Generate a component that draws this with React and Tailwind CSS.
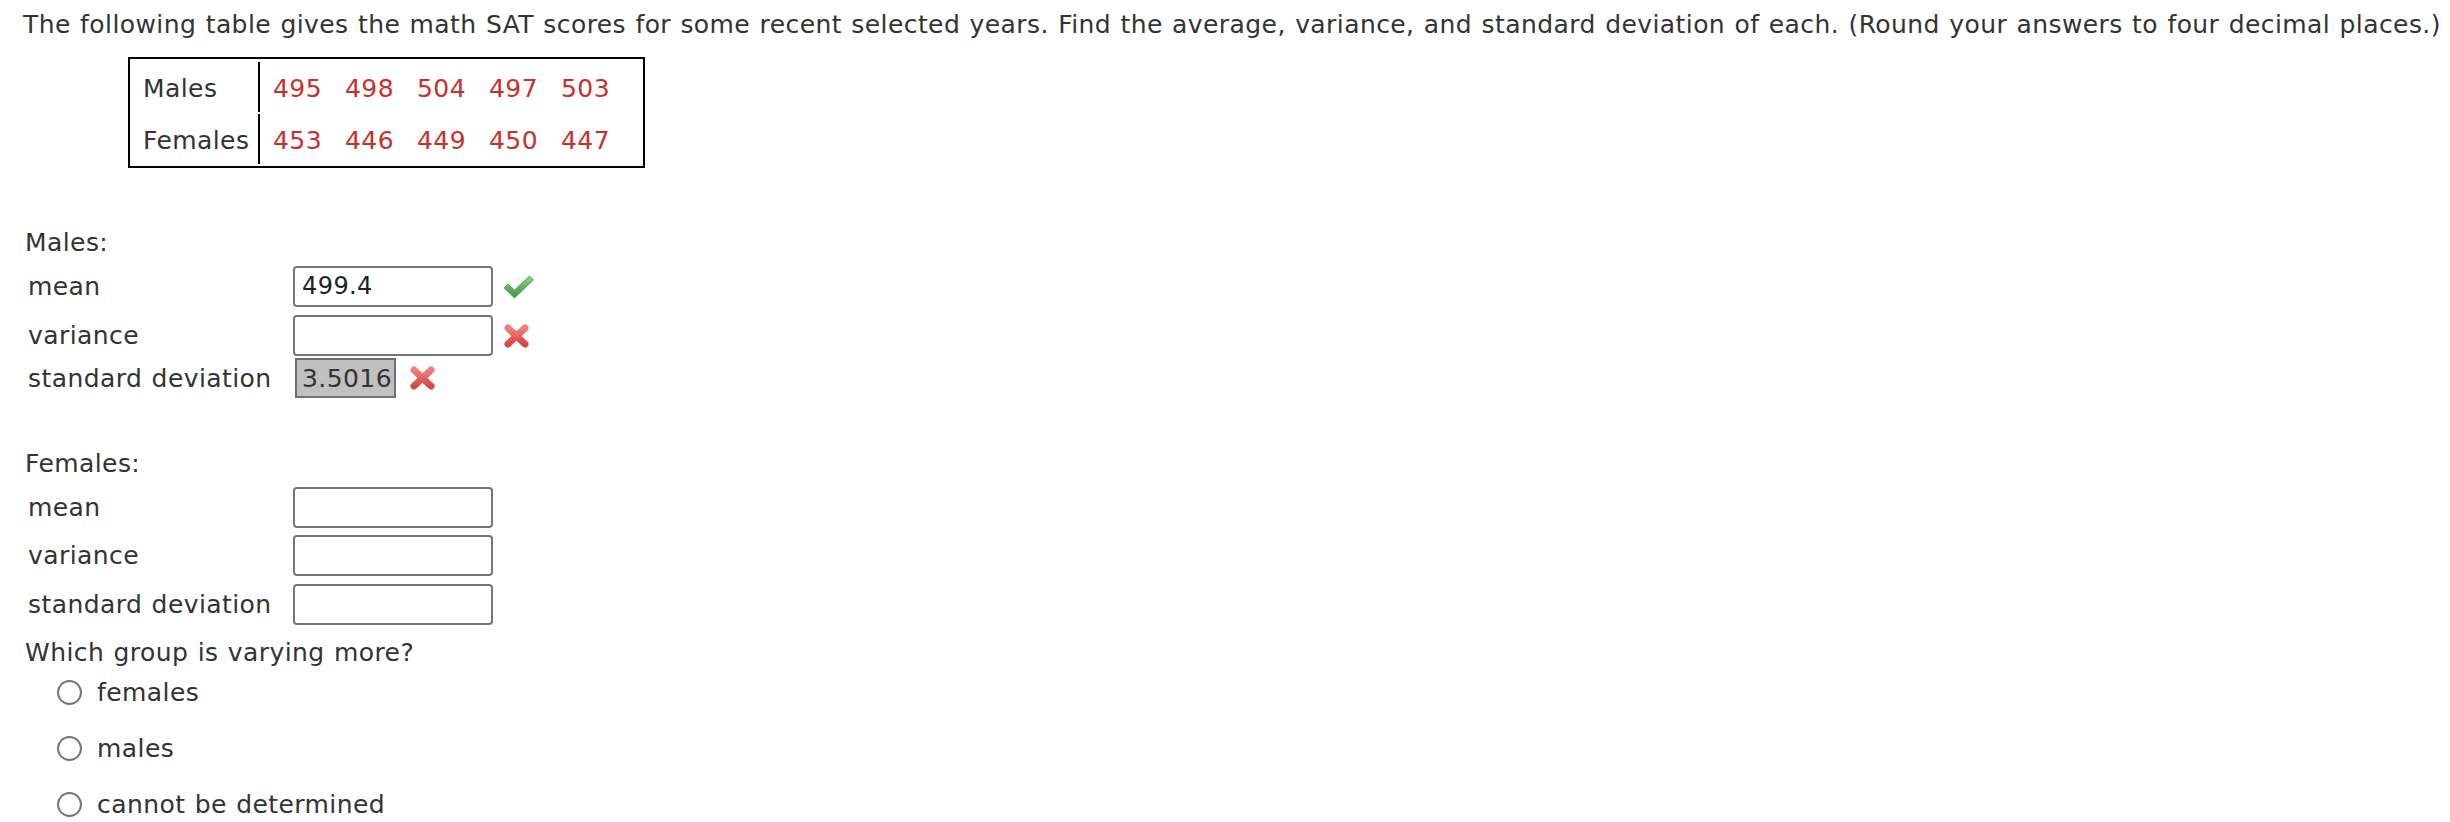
import React from 'react'

const males = [495, 498, 504, 497, 503]
const females = [453, 446, 449, 450, 447]

const CheckMark = () => (
  <svg width="31" height="24" viewBox="0 0 31 24" className="ml-[10px]">
    <defs>
      <linearGradient id="gchk" x1="0" y1="0" x2="0" y2="1">
        <stop offset="0" stopColor="#8fd08a" />
        <stop offset="1" stopColor="#3d983c" />
      </linearGradient>
    </defs>
    <path d="M1 13 L5 9 L11.5 15 L26.5 1 L30.5 5 L11.5 23 Z" fill="url(#gchk)" stroke="#4e9f4a" strokeWidth="0.8" strokeLinejoin="round" />
  </svg>
)

const Cross = ({ className = '' }) => (
  <svg width="27" height="26" viewBox="0 0 27 26" className={className}>
    <defs>
      <linearGradient id="gx" x1="0" y1="0" x2="0" y2="1">
        <stop offset="0" stopColor="#f07878" />
        <stop offset="1" stopColor="#d63c3c" />
      </linearGradient>
    </defs>
    <g stroke="url(#gx)" strokeWidth="7" strokeLinecap="round" opacity="0.95">
      <line x1="5" y1="5" x2="22" y2="21" />
      <line x1="22" y1="5" x2="5" y2="21" />
    </g>
  </svg>
)

const Field = ({ value = '' }) => (
  <div className="w-[200px] h-[41px] border-2 border-[#767676] rounded-[4px] bg-white flex items-center pl-[7px] text-[24px] text-[#222]">
    {value}
  </div>
)

const Row = ({ label, children, className = '' }) => (
  <div className={`flex items-center ${className}`}>
    <div className="w-[268px] pl-[3px]">{label}</div>
    {children}
  </div>
)

const Radio = ({ label, className = '' }) => (
  <div className={`flex items-center ml-[32px] h-[29px] ${className}`}>
    <span className="w-[25px] h-[25px] rounded-full border-2 border-[#767676] bg-white" />
    <span className="ml-[15px]">{label}</span>
  </div>
)

export default function App() {
  return (
    <div className="min-h-[822px] bg-white text-[#333] text-[25px] leading-[29px] tracking-[0.42px] [word-spacing:1px] pl-[23px] pt-[10px]" style={{ fontFamily: '"DejaVu Sans", Verdana, sans-serif' }}>
      <p className="whitespace-nowrap">
        The following table gives the math SAT scores for some recent selected years. Find the average, variance, and standard deviation of each. (Round your answers to four decimal places.)
      </p>

      <div className="ml-[105px] mt-[18px] w-[517px] border-2 border-black pt-[3px] pb-[2px] pl-[2px]">
        {[['Males', males], ['Females', females]].map(([name, vals], i) => (
          <div key={name} className={`flex h-[50px] ${i ? 'mt-[2px]' : ''}`}>
            <div className="w-[128px] border-r-2 border-black pl-[11px] flex items-center pt-[2px]">{name}</div>
            {vals.map(v => (
              <div key={v} className="w-[72px] pl-[13px] flex items-center pt-[2px] text-[#c9302c]">{v}</div>
            ))}
          </div>
        ))}
      </div>

      <div className="mt-[60px] ml-[2px]">
        <div>Males:</div>
        <Row label="mean" className="mt-[9px]">
          <Field value="499.4" />
          <CheckMark />
        </Row>
        <Row label="variance" className="mt-[8px]">
          <Field />
          <Cross className="ml-[10px]" />
        </Row>
        <Row label="standard deviation" className="mt-[2px]">
          <div className="w-[101px] h-[40px] border-2 border-[#6f6f6f] bg-[#c0c0c0] flex items-center pl-[5px] ml-[2px] text-[#333]">3.5016</div>
          <Cross className="ml-[13px]" />
        </Row>

        <div className="mt-[51px]">Females:</div>
        <Row label="mean" className="mt-[9px]">
          <Field />
        </Row>
        <Row label="variance" className="mt-[7px]">
          <Field />
        </Row>
        <Row label="standard deviation" className="mt-[8px]">
          <Field />
        </Row>

        <div className="mt-[13px]">Which group is varying more?</div>
        <Radio label="females" className="mt-[11px]" />
        <Radio label="males" className="mt-[27px]" />
        <Radio label="cannot be determined" className="mt-[27px]" />
      </div>
    </div>
  )
}
